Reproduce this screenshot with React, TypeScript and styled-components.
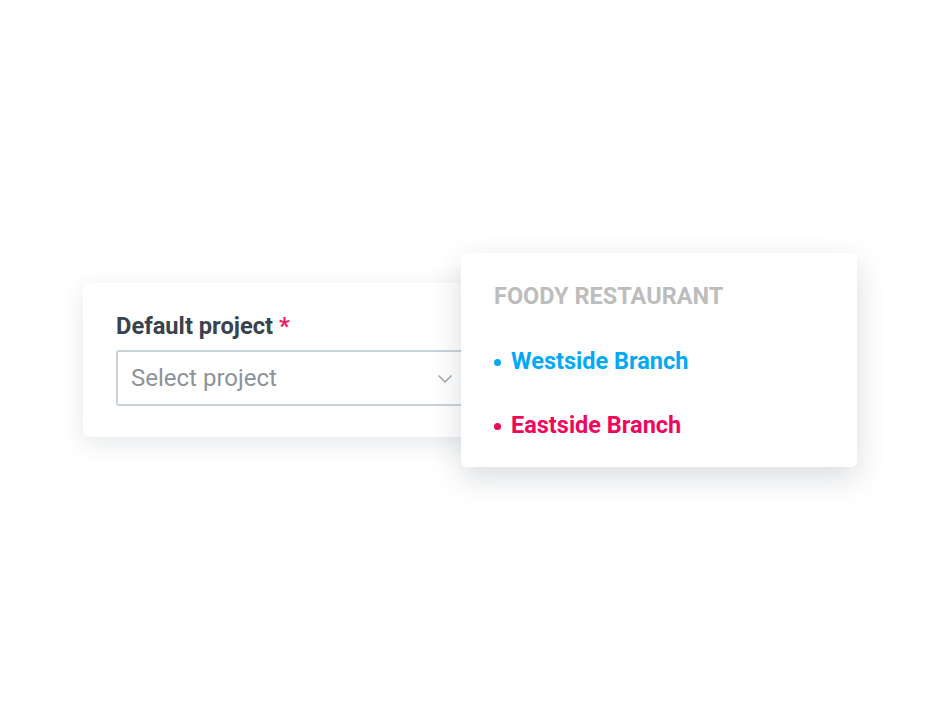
import React from "react";
import styled, { createGlobalStyle } from "styled-components";

const Global = createGlobalStyle`
  html, body { margin: 0; padding: 0; background: #ffffff; }
  body { font-family: Roboto, "Noto Sans", sans-serif; }
  * { box-sizing: border-box; }
`;

const Stage = styled.div`
  position: relative;
  width: 940px;
  height: 721px;
  padding: 283px 0 0 83px;
`;

const Card = styled.div`
  width: 400px;
  height: 154px;
  background: #fff;
  border-radius: 6px;
  box-shadow: 0 6px 24px rgba(40, 55, 70, 0.12);
  padding: 28px 0 0 33px;
  display: flex;
  flex-direction: column;
  gap: 9px;
`;

const Label = styled.div`
  font-size: 23.7px;
  font-weight: 700;
  color: #39434d;
  line-height: 30px;
`;

const Required = styled.span`
  color: #ea1f63;
  margin-left: 6px;
`;

const Select = styled.div`
  width: 355px;
  height: 56px;
  border: 2px solid #c9d3da;
  border-radius: 3px;
  display: flex;
  align-items: center;
  padding: 0 16px 0 13px;
  justify-content: space-between;
`;

const Placeholder = styled.span`
  font-size: 24px;
  color: #8d9398;
`;

const Chevron = styled.svg`
  width: 16px;
  height: 10px;
  margin-top: 2px;
`;

const Menu = styled.div`
  position: absolute;
  left: 461px;
  top: 253px;
  width: 396px;
  height: 214px;
  background: #fff;
  border-radius: 6px;
  box-shadow: 0 10px 30px rgba(40, 55, 70, 0.18);
  padding: 29px 0 0 33px;
  display: flex;
  flex-direction: column;
`;

const Heading = styled.div`
  font-size: 23.5px;
  font-weight: 700;
  color: #bdbdbd;
  line-height: 28px;
  margin-bottom: 37px;
`;

const Item = styled.div<{ $color: string }>`
  font-size: 23.5px;
  font-weight: 700;
  color: ${(p) => p.$color};
  line-height: 28px;
  display: flex;
  align-items: center;
  gap: 10px;
  margin-bottom: 36px;
  &::before {
    content: "";
    width: 7px;
    height: 7px;
    margin-top: 2px;
    border-radius: 50%;
    background: ${(p) => p.$color};
  }
`;

export default function App() {
  return (
    <>
      <Global />
      <Stage>
        <Card>
          <Label>
            Default project<Required>*</Required>
          </Label>
          <Select>
            <Placeholder>Select project</Placeholder>
            <Chevron viewBox="0 0 16 10">
              <path d="M1.5 1.5 L8 8 L14.5 1.5" fill="none" stroke="#a0a7ad" strokeWidth="1.5" />
            </Chevron>
          </Select>
        </Card>
        <Menu>
          <Heading>FOODY RESTAURANT</Heading>
          <Item $color="#03a9f4">Westside Branch</Item>
          <Item $color="#f0065a">Eastside Branch</Item>
        </Menu>
      </Stage>
    </>
  );
}
